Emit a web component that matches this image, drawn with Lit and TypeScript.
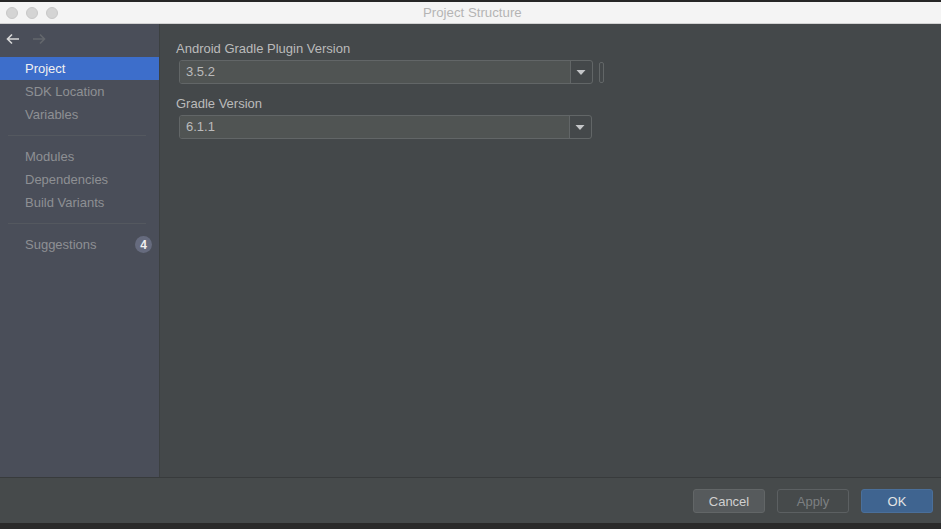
import { LitElement, html, css, svg } from "lit";
import { customElement } from "lit/decorators.js";

const arrow = (dir: "left" | "right") => svg`<svg class="arrow ${dir}" width="16" height="12" viewBox="0 0 16 12" fill="none" stroke="currentColor" stroke-width="1.6">
  ${dir === "left"
    ? svg`<path d="M14 6H2.5M7 1.5 2.5 6 7 10.5"/>`
    : svg`<path d="M2 6h11.5M9 1.5 13.5 6 9 10.5"/>`}
</svg>`;

@customElement("app-root")
export class AppRoot extends LitElement {
  static styles = css`
    :host {
      display: flex;
      flex-direction: column;
      width: 941px;
      height: 529px;
      overflow: hidden;
      background: #2a2a2a;
      font-family: "Liberation Sans", Arial, sans-serif;
      font-size: 13px;
      color: #bbbbbb;
    }
    .top-strip { height: 2px; background: #262626; flex: none; }
    .titlebar {
      height: 22px;
      box-sizing: border-box;
      flex: none;
      display: flex;
      align-items: center;
      position: relative;
      background: #f4f4f4;
      border-bottom: 1px solid #d2d2d2;
      padding-left: 6px;
      gap: 8px;
    }
    .light { width: 12px; height: 12px; border-radius: 50%; background: #d4d4d4; border: 0.5px solid #c8c8c8; box-sizing: border-box; }
    .title {
      position: absolute;
      left: 423px;
      top: 3px;
      font-size: 13.25px;
      line-height: 15px;
      color: #b4b4b4;
    }
    .body { flex: 1; display: flex; min-height: 0; background: #44484a; }
    .sidebar {
      width: 160px;
      box-sizing: border-box;
      flex: none;
      background: #4a4e59;
      border-right: 1px solid #3c4041;
      display: flex;
      flex-direction: column;
    }
    .nav { height: 33px; flex: none; display: flex; align-items: center; gap: 10px; padding-left: 5px; box-sizing: border-box; padding-bottom: 4px; }
    .arrow.left { color: #d8d8d8; }
    .arrow.right { color: #63676c; }
    .item {
      height: 23px;
      flex: none;
      display: flex;
      align-items: center;
      justify-content: space-between;
      padding: 0 7px 0 25px;
      color: #8e9094;
    }
    .item.sel { background: #3d6ecb; color: #f0f0f0; }
    .sep { height: 1px; background: #54585f; margin: 9px 13px 9px 8px; flex: none; }
    .badge {
      width: 17px;
      height: 17px;
      border-radius: 50%;
      background: #666b7e;
      color: #f0f0f0;
      font-size: 12px;
      font-weight: 700;
      display: flex;
      align-items: center;
      justify-content: center;
    }
    .main { flex: 1; padding: 16px 0 0 16px; display: flex; flex-direction: column; }
    .label { height: 20px; line-height: 17px; color: #bbbbbb; }
    .row { display: flex; align-items: center; margin-bottom: 11px; gap: 6px; padding-left: 3px; }
    .combo {
      height: 24px;
      box-sizing: border-box;
      display: flex;
      border: 1px solid #626667;
      border-radius: 3px;
    }
    .combo.first { width: 414px; }
    .combo.second { width: 413px; }
    .value {
      flex: 1;
      background: #505453;
      padding-left: 6px;
      line-height: 22px;
      color: #bbbbbb;
      border-right: 1px solid #626667;
      border-radius: 2px 0 0 2px;
    }
    .drop { width: 21px; display: flex; align-items: center; justify-content: center; padding-right: 1px; box-sizing: border-box; }
    .stub { width: 3px; height: 19px; border: 1px solid #626667; border-radius: 2px; }
    .footer {
      height: 46px;
      box-sizing: border-box;
      flex: none;
      background: #464a4b;
      border-top: 1px solid #383b3c;
      display: flex;
      justify-content: flex-end;
      align-items: center;
      gap: 12px;
      padding: 0 8px 0 0;
    }
    .btn {
      width: 72px;
      height: 24px;
      box-sizing: border-box;
      border-radius: 3px;
      display: flex;
      align-items: center;
      justify-content: center;
      font-size: 13px;
      padding-top: 2px;
      border: 1px solid #626667;
      background: #565a5c;
      color: #d0d0d0;
    }
    .btn.off { background: #464a4b; color: #7d8082; border-color: #5c6062; }
    .btn.ok { background: #3f6490; border-color: #4a6f9a; color: #e4e4e4; }
    .bottom-strip { height: 6px; flex: none; background: #2a2a2a; }
  `;

  private combo(value: string, cls: string) {
    return html`<div class="combo ${cls}">
      <div class="value">${value}</div>
      <div class="drop">
        <svg width="12" height="7" viewBox="0 0 12 7"><path d="M1.5 1h9L6 6z" fill="#c4c6c8"/></svg>
      </div>
    </div>`;
  }

  render() {
    return html`
      <div class="top-strip"></div>
      <div class="titlebar">
        <span class="light"></span><span class="light"></span><span class="light"></span>
        <span class="title">Project Structure</span>
      </div>
      <div class="body">
        <aside class="sidebar">
          <div class="nav">${arrow("left")}${arrow("right")}</div>
          <div class="item sel">Project</div>
          <div class="item">SDK Location</div>
          <div class="item">Variables</div>
          <div class="sep"></div>
          <div class="item">Modules</div>
          <div class="item">Dependencies</div>
          <div class="item">Build Variants</div>
          <div class="sep"></div>
          <div class="item">Suggestions<span class="badge">4</span></div>
        </aside>
        <main class="main">
          <div class="label">Android Gradle Plugin Version</div>
          <div class="row">${this.combo("3.5.2", "first")}<div class="stub"></div></div>
          <div class="label">Gradle Version</div>
          <div class="row">${this.combo("6.1.1", "second")}</div>
        </main>
      </div>
      <div class="footer">
        <div class="btn">Cancel</div>
        <div class="btn off">Apply</div>
        <div class="btn ok">OK</div>
      </div>
      <div class="bottom-strip"></div>
    `;
  }
}
